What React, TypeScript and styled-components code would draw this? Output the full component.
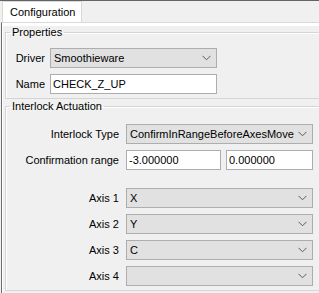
import React from "react";
import styled, { createGlobalStyle } from "styled-components";

const Global = createGlobalStyle`
  html, body { margin: 0; padding: 0; background: #f0f0f0; }
  body { font-family: "Liberation Sans", Arial, sans-serif; font-size: 11px; color: #000; }
`;

const Window = styled.div`
  width: 319px;
  height: 293px;
  overflow: hidden;
  background: #f0f0f0;
  border-top: 1px solid #646464;
  box-sizing: border-box;
`;

const TabStrip = styled.div`
  display: flex;
  align-items: flex-end;
  height: 21px;
  padding-left: 2px;
`;

const Tab = styled.div`
  box-sizing: border-box;
  height: 21px;
  width: 80px;
  padding: 4px 0 0 7px;
  background: #ffffff;
  border: 1px solid #d9d9d9;
  border-bottom: none;
  line-height: 13px;
`;

const Pane = styled.div`
  width: 345px;
  margin-left: 1px;
  height: 280px;
  border-top: 1px solid #d9d9d9;
  border-left: 1px solid #6e6e6e;
  box-shadow: inset 1px 3px 0 #ffffff;
  padding: 3px 0 0 3px;
  box-sizing: border-box;
  display: flex;
  flex-direction: column;
`;

const Group = styled.fieldset<{ $padTop: number; $padBottom: number }>`
  margin: 0;
  padding: ${(p) => p.$padTop}px 0 ${(p) => p.$padBottom}px 0;
  border: 1px solid #d5d5d5;
  box-shadow: inset 1px 1px 0 #ffffff;
  min-width: 0;
  & + & { margin-top: 1px; }
`;

const Legend = styled.legend`
  margin-left: 4px;
  padding: 0 2px;
  line-height: 13px;
  font-size: 11px;
`;

const FormGrid = styled.div<{ $label: number; $gap: number; $field: number; $mt?: number }>`
  display: grid;
  grid-template-columns: ${(p) => p.$label}px ${(p) => p.$field}px;
  grid-auto-rows: 20px;
  column-gap: ${(p) => p.$gap}px;
  row-gap: 6px;
  margin-top: ${(p) => p.$mt ?? 0}px;
`;

const Label = styled.div`
  display: flex;
  align-items: center;
  justify-content: flex-end;
  white-space: nowrap;
`;

const ComboBox = styled.div`
  box-sizing: border-box;
  height: 20px;
  display: flex;
  align-items: center;
  background: #e1e1e1;
  border: 1px solid #adadad;
  padding: 0 5px 0 3px;
  white-space: nowrap;
  overflow: hidden;
`;

const ComboText = styled.span`
  flex: 1;
  overflow: hidden;
`;

const TextField = styled.div`
  box-sizing: border-box;
  height: 20px;
  display: flex;
  align-items: center;
  background: #ffffff;
  border: 1px solid #adadad;
  padding: 0 2px;
  white-space: nowrap;
  overflow: hidden;
`;

const Pair = styled.div`
  display: grid;
  grid-template-columns: 95px 87px;
  column-gap: 5px;
`;

const Chevron = () => (
  <svg width="9" height="6" viewBox="0 0 9 6">
    <polyline points="0.5,0.8 4.5,4.8 8.5,0.8" fill="none" stroke="#5a5a5a" strokeWidth="1" />
  </svg>
);

const Combo = ({ value }: { value: string }) => (
  <ComboBox>
    <ComboText>{value}</ComboText>
    <Chevron />
  </ComboBox>
);

export default function App() {
  return (
    <>
      <Global />
      <Window>
        <TabStrip>
          <Tab>Configuration</Tab>
        </TabStrip>
        <Pane>
          <Group $padTop={9} $padBottom={4}>
            <Legend>Properties</Legend>
            <FormGrid $label={39} $gap={5} $field={167}>
              <Label>Driver</Label>
              <Combo value="Smoothieware" />
              <Label>Name</Label>
              <TextField>CHECK_Z_UP</TextField>
            </FormGrid>
          </Group>
          <Group $padTop={11} $padBottom={4}>
            <Legend>Interlock Actuation</Legend>
            <FormGrid $label={113} $gap={7} $field={187}>
              <Label>Interlock Type</Label>
              <Combo value="ConfirmInRangeBeforeAxesMove" />
              <Label>Confirmation range</Label>
              <Pair>
                <TextField>-3.000000</TextField>
                <TextField>0.000000</TextField>
              </Pair>
            </FormGrid>
            <FormGrid $label={113} $gap={7} $field={187} $mt={18}>
              <Label>Axis 1</Label>
              <Combo value="X" />
              <Label>Axis 2</Label>
              <Combo value="Y" />
              <Label>Axis 3</Label>
              <Combo value="C" />
              <Label>Axis 4</Label>
              <Combo value="" />
            </FormGrid>
          </Group>
        </Pane>
      </Window>
    </>
  );
}
